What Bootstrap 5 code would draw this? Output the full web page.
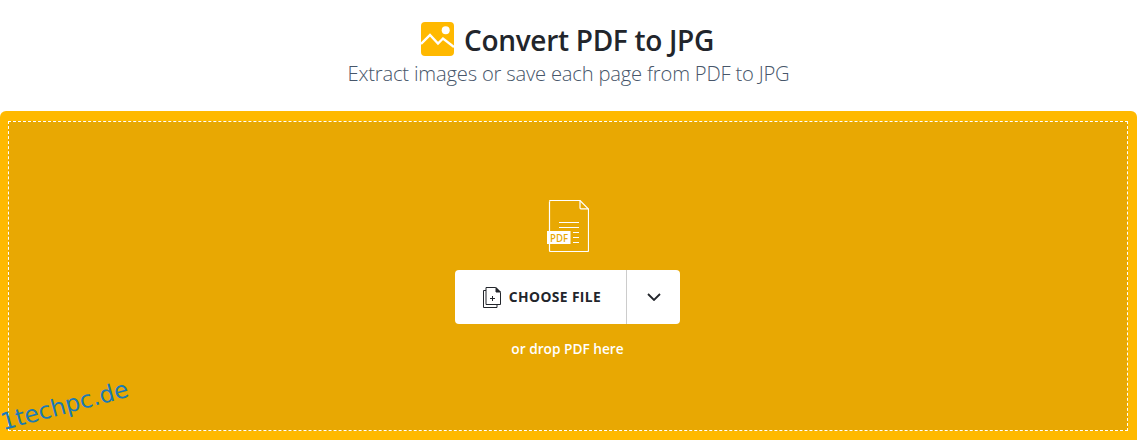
<!DOCTYPE html>
<html lang="en">
<head>
    <meta charset="UTF-8">
    <meta name="viewport" content="width=device-width, initial-scale=1.0">
    <title>Convert PDF to JPG</title>
    <link href="https://cdn.jsdelivr.net/npm/bootstrap@5.3.0/dist/css/bootstrap.min.css" rel="stylesheet">
    <style>
        html, body { height: 440px; overflow: hidden; }
        body { font-family: "Open Sans", "Noto Sans", sans-serif; background: #fff; position: relative; }
        .page-head { height: 111px; padding-top: 22px; }
        .head-row { padding-right: 2px; gap: 10px; }
        .page-title { font-size: 28px; line-height: 32px; padding-top: 2px; font-weight: 600; color: #22252b; margin: 0; letter-spacing: -.3px; }
        .page-sub { font-size: 20.2px; line-height: 26px; font-weight: 300; color: #47566a; margin: 4px 0 0; letter-spacing: -.2px; }
        .drop-outer { height: 329px; background: #ffb900; border-radius: 6px 6px 0 0; padding: 10px 9px 9px 8px; }
        .drop-zone { height: 310px; background: #e8a803; border: 1px dashed #fff; padding: 78px 1px 0 0; }
        .pick-group { width: 225px; height: 54px; background: #fff; border-radius: 4px; margin-top: 18px; }
        .pick-main { width: 171px; border: 0; background: none; font-size: 13.8px; font-weight: 700; letter-spacing: .4px; color: #22252b; gap: 8px; padding: 1px 0 0 3px; }
        .pick-more { width: 54px; border: 0; border-left: 1px solid #ccc; background: none; }
        .drop-hint { margin: 15px 0 0; font-size: 13.7px; line-height: 20px; font-weight: 600; color: #fff; }
        .wm-text { position: absolute; left: 5px; top: 407px; font-family: "DejaVu Sans", sans-serif; font-size: 23.5px; line-height: 30px; color: #1b7ab5; transform: rotate(-15deg); transform-origin: left bottom; white-space: nowrap; }
    </style>
</head>
<body>

    <header class="page-head text-center">
        <div class="head-row d-flex justify-content-center align-items-center">
            <svg width="33" height="34" viewBox="0 0 33 34">
                <rect width="33" height="34" rx="4" fill="#ffb900"/>
                <circle cx="24.7" cy="8.3" r="4" fill="#fff"/>
                <path d="M0 22 L9 13 L17 21.5 L22 16.5 L33 25" fill="none" stroke="#fff" stroke-width="2.4"/>
            </svg>
            <h1 class="page-title">Convert PDF to JPG</h1>
        </div>
        <p class="page-sub">Extract images or save each page from PDF to JPG</p>
    </header>

    <main class="drop-outer">
        <div class="drop-zone d-flex flex-column align-items-center">
            <svg width="43" height="52" viewBox="-1 0 43 52" fill="none" stroke="#fff" stroke-width="1.2">
                <path d="M2.5 1.5 a1 1 0 0 1 1 -1 H33 L41.5 9 V50.5 a1 1 0 0 1 -1 1 H3.5 a1 1 0 0 1 -1 -1 V40"/>
                <path d="M33 .5 V7.8 a1 1 0 0 0 1 1 H41.5"/>
                <path d="M2.5 1.5 V32"/>
                <path d="M12 22.5 H32 M12 27.5 H32 M26 32.5 H32 M26 37.5 H32 M26 42.5 H32"/>
                <rect x="0" y="31" width="23.5" height="13" fill="#fff" stroke="none"/>
                <text x="3" y="41.5" font-family="Open Sans, sans-serif" font-size="10.5" font-weight="600" fill="#e8a803" stroke="none" textLength="18" lengthAdjust="spacingAndGlyphs">PDF</text>
            </svg>
            <div class="pick-group d-flex">
                <button type="button" class="pick-main d-flex align-items-center justify-content-center">
                    <svg width="18" height="21" viewBox="0 0 18 21" fill="none" stroke="#22252b" stroke-width="1">
                        <path d="M3 3.5 H.5 V20.5 H14 V18"/>
                        <path d="M3 .5 H12.5 L17.5 5.5 V17.5 H3 Z" fill="#fff"/>
                        <path d="M13 .5 L17.5 5 H13 Z" fill="#22252b"/>
                        <path d="M7 11.5 H12 M9.5 9 V14"/>
                    </svg>
                    <span>CHOOSE FILE</span>
                </button>
                <button type="button" class="pick-more d-flex align-items-center justify-content-center" aria-label="More">
                    <svg width="14" height="8" viewBox="0 0 14 8" fill="none" stroke="#22252b" stroke-width="1.8"><path d="M1 1 L7 7 L13 1"/></svg>
                </button>
            </div>
            <p class="drop-hint">or drop PDF here</p>
        </div>
    </main>

    <div class="wm-text">1techpc.de</div>

<script src="https://cdn.jsdelivr.net/npm/bootstrap@5.3.0/dist/js/bootstrap.bundle.min.js"></script>
</body>
</html>
